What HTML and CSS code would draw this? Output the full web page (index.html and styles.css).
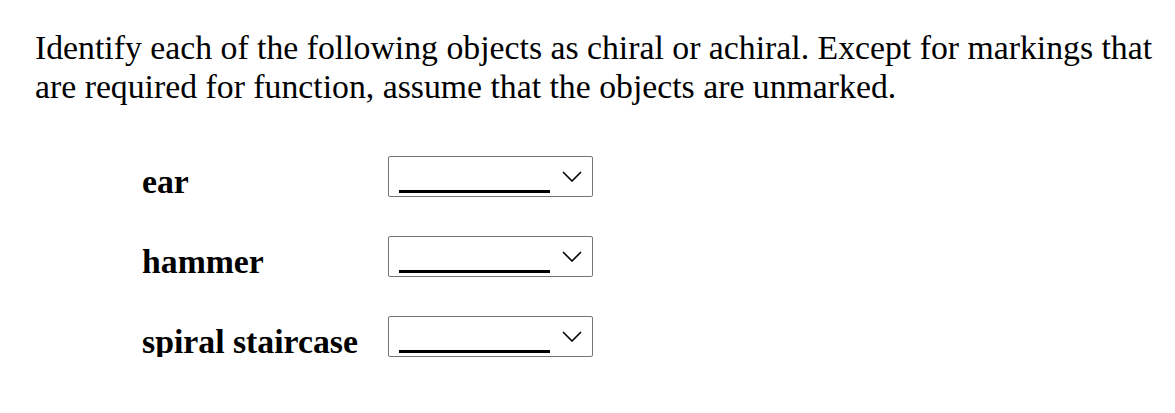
FILE: index.html
```html
<!DOCTYPE html>
<html>
<head>
<meta charset="utf-8">
<link rel="stylesheet" href="styles.css">
</head>
<body>
<div class="page">
  <p class="question">Identify each of the following objects as chiral or achiral. Except for markings that are required for function, assume that the objects are unmarked.</p>
  <div class="items">
    <div class="row">
      <div class="label">ear</div>
      <div class="select"><span class="blank"></span><svg class="chev" width="20" height="11" viewBox="0 0 20 11"><path d="M1 1 L10 10 L19 1" fill="none" stroke="#000" stroke-width="1.6"/></svg></div>
    </div>
    <div class="row">
      <div class="label">hammer</div>
      <div class="select"><span class="blank"></span><svg class="chev" width="20" height="11" viewBox="0 0 20 11"><path d="M1 1 L10 10 L19 1" fill="none" stroke="#000" stroke-width="1.6"/></svg></div>
    </div>
    <div class="row">
      <div class="label">spiral staircase</div>
      <div class="select"><span class="blank"></span><svg class="chev" width="20" height="11" viewBox="0 0 20 11"><path d="M1 1 L10 10 L19 1" fill="none" stroke="#000" stroke-width="1.6"/></svg></div>
    </div>
  </div>
</div>
</body>
</html>
```

FILE: styles.css
```css
html, body {
  margin: 0;
  padding: 0;
  background: #fff;
}
.page {
  padding: 28px 0 0 35px;
  font-family: "Liberation Serif", "Times New Roman", serif;
  color: #000;
}
.question {
  margin: 0;
  font-size: 33.75px;
  line-height: 39px;
  width: 1135px;
}
.items {
  display: flex;
  flex-direction: column;
  gap: 39px;
  margin-top: 50px;
  padding-left: 107px;
}
.row {
  display: flex;
  align-items: center;
  height: 41px;
}
.label {
  width: 246px;
  font-weight: bold;
  font-size: 33.75px;
  padding-top: 10px;
}
.select {
  box-sizing: border-box;
  width: 205px;
  height: 41px;
  border: 1px solid #767676;
  border-radius: 2px;
  display: flex;
  align-items: flex-start;
}
.blank {
  display: block;
  width: 151px;
  height: 3px;
  background: #000;
  margin: 33px 0 0 10px;
}
.chev {
  margin: 14px 0 0 12px;
}
```
